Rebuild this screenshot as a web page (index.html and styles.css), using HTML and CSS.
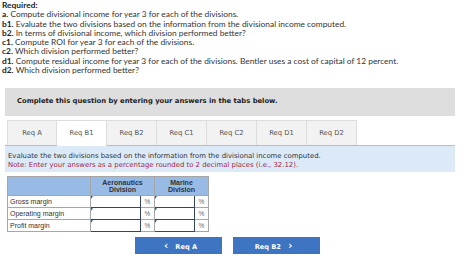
FILE: index.html
```html
<!DOCTYPE html>
<html>
  <head>
    <title>Divisional income</title>
    <link rel="stylesheet" href="styles.css">
  </head>
  <body>
    <div class="required">
      <p class="title">Required:</p>
      <p><b>a.</b> Compute divisional income for year 3 for each of the divisions.</p>
      <p><b>b1.</b> Evaluate the two divisions based on the information from the divisional income computed.</p>
      <p><b>b2.</b> In terms of divisional income, which division performed better?</p>
      <p><b>c1.</b> Compute ROI for year 3 for each of the divisions.</p>
      <p><b>c2.</b> Which division performed better?</p>
      <p><b>d1.</b> Compute residual income for year 3 for each of the divisions. Bentler uses a cost of capital of 12 percent.</p>
      <p><b>d2.</b> Which division performed better?</p>
    </div>

    <div class="panel">
      <div class="prompt">Complete this question by entering your answers in the tabs below.</div>

      <div class="tabs">
        <div class="tab">Req A</div>
        <div class="tab active">Req B1</div>
        <div class="tab">Req B2</div>
        <div class="tab">Req C1</div>
        <div class="tab">Req C2</div>
        <div class="tab">Req D1</div>
        <div class="tab">Req D2</div>
      </div>

      <div class="info">
        <p>Evaluate the two divisions based on the information from the divisional income computed.</p>
        <p class="note">Note: Enter your answers as a percentage rounded to 2 decimal places (i.e., 32.12).</p>
      </div>

      <table class="grid">
        <tr class="head">
          <th class="label"></th>
          <th colspan="2" class="c1">Aeronautics<br>Division</th>
          <th colspan="2" class="c2">Marine<br>Division</th>
        </tr>
        <tr>
          <td class="label">Gross margin</td>
          <td class="entry"></td><td class="pct">%</td>
          <td class="entry small"></td><td class="pct">%</td>
        </tr>
        <tr>
          <td class="label">Operating margin</td>
          <td class="entry"></td><td class="pct">%</td>
          <td class="entry small"></td><td class="pct">%</td>
        </tr>
        <tr>
          <td class="label">Profit margin</td>
          <td class="entry"></td><td class="pct">%</td>
          <td class="entry small"></td><td class="pct">%</td>
        </tr>
      </table>

      <div class="nav">
        <div class="btn"><span class="arrow">&lsaquo;</span> Req A</div>
        <div class="btn">Req B2 <span class="arrow">&rsaquo;</span></div>
      </div>
    </div>
  </body>
</html>
```

FILE: styles.css
```css
body {
  margin: 0;
  padding: 0 2px;
  background: #fff;
}
p {
  margin: 0;
}
.required {
  font-family: Lato, "Liberation Sans", sans-serif;
  font-size: 8.4px;
  line-height: 9.3px;
  color: #333;
  padding-top: 1px;
}
.required .title {
  font-weight: bold;
  color: #222;
}
.required b {
  color: #222;
}
.panel {
  width: 450px;
  margin: 13px 0 0 3px;
}
.prompt {
  background: #dedede;
  height: 28px;
  line-height: 26px;
  padding-left: 12px;
  font-family: "DejaVu Sans", Verdana, sans-serif;
  font-weight: bold;
  font-size: 6.8px;
  color: #222;
}
.tabs {
  display: flex;
  margin: 4px 0 0 2px;
  height: 25px;
}
.tab {
  width: 50px;
  box-sizing: border-box;
  background: #f2f2f2;
  border: 1px solid #ddd;
  border-bottom: none;
  font-family: "DejaVu Sans", Verdana, sans-serif;
  font-size: 6.8px;
  color: #555;
  text-align: center;
  line-height: 24px;
}
.tab + .tab {
  border-left: none;
}
.tab.active {
  background: #fff;
  height: 26px;
  position: relative;
  z-index: 1;
}
.info {
  background: #dce9f6;
  border-top: 1px solid #a8c0dc;
  height: 27px;
  box-sizing: border-box;
  padding: 6px 0 0 3px;
  font-family: "DejaVu Sans", Verdana, sans-serif;
  font-size: 6.9px;
  line-height: 8.5px;
  color: #333;
}
.info .note {
  color: #a02a4a;
}
.grid {
  border-collapse: collapse;
  margin: 4px 0 0 2px;
  font-family: "Liberation Sans", Arial, sans-serif;
  font-size: 7px;
  color: #333;
}
.grid td, .grid th {
  border: 1px solid #a6a6a6;
  padding: 0;
  height: 11px;
}
.grid .head th {
  background: #98bbe6;
  height: 18px;
  font-weight: bold;
  line-height: 7.5px;
  color: #333;
}
.grid .label {
  width: 80px;
  padding-left: 2px;
  text-align: left;
}
.grid .c1 {
  width: 63px;
}
.grid .c2 {
  width: 53px;
}
.grid .entry {
  position: relative;
  width: 48px;
  border: 1px solid #34456a;
  background: #fff;
}
.grid .entry.small {
  width: 38px;
}
.grid .entry::before {
  content: "";
  position: absolute;
  left: 0;
  top: 0;
  border-top: 3px solid #2f5fb0;
  border-right: 2px solid transparent;
}
.grid .pct {
  width: 13px;
  text-align: center;
  color: #666;
  font-size: 6.5px;
}
.nav {
  display: flex;
  justify-content: center;
  gap: 11px;
  margin-top: 5px;
  padding-right: 6px;
}
.btn {
  width: 87px;
  height: 17px;
  line-height: 17px;
  background: #3d75c2;
  color: #fff;
  font-family: "DejaVu Sans", Verdana, sans-serif;
  font-weight: bold;
  font-size: 6.6px;
  text-align: center;
}
.arrow {
  font-size: 10px;
  margin: 0 5px;
}
```
